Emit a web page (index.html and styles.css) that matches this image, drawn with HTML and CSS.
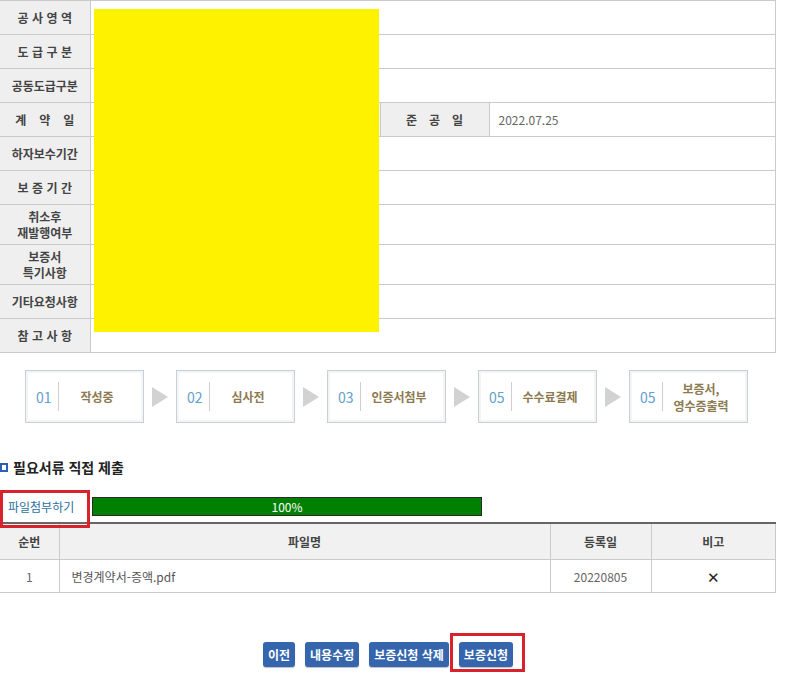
FILE: index.html
```html
<!DOCTYPE html>
<html lang="ko">
<head>
<meta charset="utf-8">
<title>보증신청</title>
<link rel="stylesheet" href="styles.css">
</head>
<body>
<div class="page">
  <div class="info-wrap">
    <table class="info">
      <colgroup><col class="c-label"><col class="c-val"><col class="c-label2"><col class="c-val2"></colgroup>
      <tr><th><span class="ls3">공사영역</span></th><td colspan="3"></td></tr>
      <tr><th><span class="ls3">도급구분</span></th><td colspan="3"></td></tr>
      <tr><th>공동도급구분</th><td colspan="3"></td></tr>
      <tr><th><span class="ls13">계약일</span></th><td></td><th><span class="ls12">준공일</span></th><td class="val">2022.07.25</td></tr>
      <tr><th>하자보수기간</th><td colspan="3"></td></tr>
      <tr><th><span class="ls3">보증기간</span></th><td colspan="3"></td></tr>
      <tr class="tall"><th class="two"><span class="ln">취소후</span><span class="ln">재발행여부</span></th><td colspan="3"></td></tr>
      <tr class="tall"><th class="two"><span class="ln">보증서</span><span class="ln">특기사항</span></th><td colspan="3"></td></tr>
      <tr><th>기타요청사항</th><td colspan="3"></td></tr>
      <tr><th><span class="ls3">참고사항</span></th><td colspan="3"></td></tr>
    </table>
    <div class="redact"></div>
  </div>

  <div class="steps">
    <div class="step"><span class="step-num">01</span><span class="step-div"></span><span class="step-label">작성중</span></div>
    <div class="arrow"><svg width="16" height="20" viewBox="0 0 16 20"><polygon points="0,0 16,10 0,20" fill="#d2d2d2"/></svg></div>
    <div class="step"><span class="step-num">02</span><span class="step-div"></span><span class="step-label">심사전</span></div>
    <div class="arrow"><svg width="16" height="20" viewBox="0 0 16 20"><polygon points="0,0 16,10 0,20" fill="#d2d2d2"/></svg></div>
    <div class="step"><span class="step-num">03</span><span class="step-div"></span><span class="step-label">인증서첨부</span></div>
    <div class="arrow"><svg width="16" height="20" viewBox="0 0 16 20"><polygon points="0,0 16,10 0,20" fill="#d2d2d2"/></svg></div>
    <div class="step"><span class="step-num">05</span><span class="step-div"></span><span class="step-label">수수료결제</span></div>
    <div class="arrow"><svg width="16" height="20" viewBox="0 0 16 20"><polygon points="0,0 16,10 0,20" fill="#d2d2d2"/></svg></div>
    <div class="step"><span class="step-num">05</span><span class="step-div"></span><span class="step-label"><span class="ln2">보증서,</span><span class="ln2">영수증출력</span></span></div>
  </div>

  <h3 class="sec-title"><span class="sq"></span>필요서류 직접 제출</h3>

  <div class="attach">
    <a class="attach-link" href="#">파일첨부하기</a>
    <div class="progress">100%</div>
    <span class="hl-box"></span>
  </div>

  <table class="files">
    <colgroup><col class="f1"><col class="f2"><col class="f3"><col class="f4"></colgroup>
    <tr><th>순번</th><th>파일명</th><th>등록일</th><th>비고</th></tr>
    <tr><td class="c">1</td><td class="name">변경계약서-증액.pdf</td><td class="c">20220805</td><td class="c x">✕</td></tr>
  </table>

  <div class="buttons">
    <button class="btn">이전</button>
    <button class="btn">내용수정</button>
    <button class="btn">보증신청 삭제</button>
    <span class="hl"><button class="btn">보증신청</button></span>
  </div>
</div>
</body>
</html>
```

FILE: styles.css
```css
html, body { margin: 0; padding: 0; background: #fff; }
body { font-family: "Noto Sans CJK KR", "Noto Sans", sans-serif; font-size: 12px; color: #333; }
.page { width: 776px; padding-bottom: 12px; }

.info-wrap { position: relative; }
.info { width: 776px; border-collapse: collapse; table-layout: fixed; }
.c-label { width: 90px; }
.c-val { width: 290px; }
.c-label2 { width: 109px; }
.info tr { height: 34px; }
.info tr.tall { height: 40px; }
.info th, .info td { border: 1px solid #cacaca; padding: 0; }
.info tr > :first-child { border-left: none; }
.info th { background: #efefef; color: #444; font-weight: bold; font-size: 12px; text-align: center; line-height: 16px; }
.ln { display: block; height: 16px; line-height: 16px; }
.ln2 { display: block; height: 17px; line-height: 17px; }
.info td.val { color: #666; padding-left: 9px; font-size: 12px; }
.ls3 { letter-spacing: 3.4px; margin-right: -3.4px; }
.ls13 { letter-spacing: 13px; margin-right: -13px; }
.ls12 { letter-spacing: 12px; margin-right: -12px; }
.redact { position: absolute; left: 94px; top: 9px; width: 285px; height: 323px; background: #fff200; }

.steps { display: flex; align-items: center; margin-top: 17px; padding-left: 25px; }
.step { width: 119px; height: 53px; box-sizing: border-box; border: 1px solid #c9cfd6; box-shadow: inset 0 0 0 2px #f2f4f6; display: flex; align-items: center; }
.step-num { width: 32px; box-sizing: border-box; padding-left: 10px; font-size: 14px; color: #62a0cd; line-height: 16px; }
.step-div { width: 1px; height: 29px; background: #cfcfcf; }
.step-label { flex: 1; text-align: center; padding-right: 8px; font-weight: bold; font-size: 12px; line-height: 16px; color: #8c7a50; }
.arrow { width: 32px; display: flex; justify-content: center; }
.arrow svg { display: block; }

.sec-title { display: flex; align-items: center; margin: 35px 0 0; height: 18px; font-size: 14px; font-weight: bold; color: #222; line-height: 18px; }
.sq { width: 8px; height: 9px; box-sizing: border-box; border: 2px solid #2d5fb3; margin-right: 5px; }

.attach { position: relative; display: flex; align-items: center; height: 32px; margin-top: 14px; }
.attach-link { width: 92px; box-sizing: border-box; padding-left: 8px; color: #2b6f9c; text-decoration: none; font-size: 12px; }
.progress { width: 390px; height: 19px; box-sizing: border-box; border: 1px solid #2a2a2a; background: #008000; color: #fff; text-align: center; font-size: 12px; line-height: 17px; }
.hl-box { position: absolute; left: 0; top: 0; width: 90px; height: 38px; box-sizing: border-box; border: 3px solid #d8222c; z-index: 2; }

.files { width: 776px; border-collapse: collapse; table-layout: fixed; border-top: 2px solid #666; }
.f1 { width: 59px; }
.f2 { width: 491px; }
.f3 { width: 101px; }
.files th, .files td { border: 1px solid #cacaca; padding: 0; font-size: 12px; }
.files tr > :first-child { border-left: none; }
.files th { height: 35px; background: #f1f1f1; color: #444; font-weight: bold; border-top: none; }
.files td { height: 32px; color: #666; }
.files td.c { text-align: center; }
.files td.name { padding-left: 12px; color: #555; }
.files td.x { color: #222; font-size: 15px; }

.buttons { display: flex; justify-content: center; align-items: flex-start; gap: 10px; margin-top: 49px; }
.btn { display: block; height: 25px; margin: 0; padding: 0 5px; border: none; border-radius: 3px; background: #3566ad; color: #fff; font-family: "Noto Sans CJK KR", "Noto Sans", sans-serif; font-size: 12px; font-weight: bold; line-height: 25px; box-shadow: 0 1px 1px rgba(0,0,0,0.25); }
.hl { position: relative; display: flex; }
.hl::after { content: ""; position: absolute; left: -9px; top: -9px; right: -12px; bottom: -5px; border: 3px solid #d8222c; }
```
